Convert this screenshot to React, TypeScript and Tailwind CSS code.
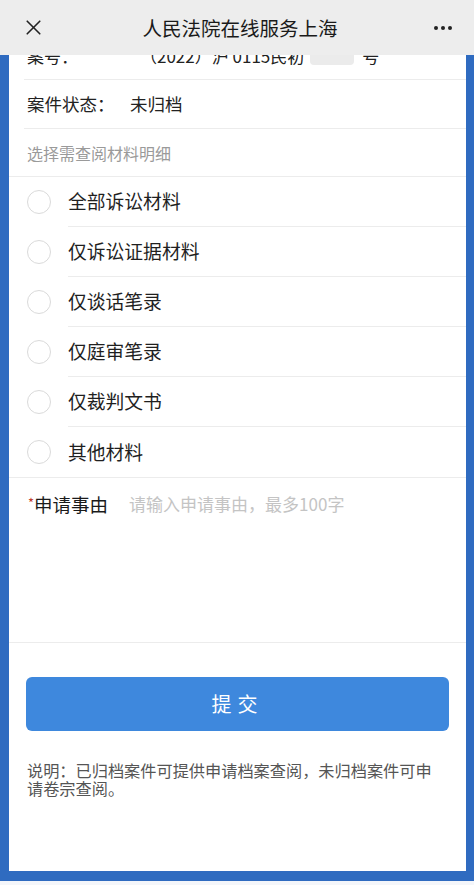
import { X } from "lucide-react";

const options = ["全部诉讼材料", "仅诉讼证据材料", "仅谈话笔录", "仅庭审笔录", "仅裁判文书", "其他材料"];

const font = { fontFamily: '"Noto Sans CJK SC", "Noto Sans", sans-serif' };

export default function App() {
  return (
    <div className="flex h-[885px] w-[474px] flex-col bg-[#f4f6fa]" style={font}>
      {/* WeChat style top bar */}
      <div className="flex h-[55px] shrink-0 items-center justify-between bg-[#ededed] pl-[21px] pr-[22px]">
        <X className="h-[25px] w-[25px] text-[#222]" strokeWidth={1.6} />
        <div className="text-[19.5px] text-[#1a1a1a]">人民法院在线服务上海</div>
        <div className="flex gap-[3px]">
          <span className="h-[4px] w-[4px] rounded-full bg-[#222]" />
          <span className="h-[4px] w-[4px] rounded-full bg-[#222]" />
          <span className="h-[4px] w-[4px] rounded-full bg-[#222]" />
        </div>
      </div>

      {/* blue frame */}
      <div className="bg-[#2f6bc0] pl-[9px] pr-[8px] pb-[10px]">
        <div className="flex h-[816px] flex-col bg-white">
          {/* case number row, cut under the top bar */}
          <div className="ml-[15px] h-[25px] overflow-hidden border-b border-[#ececec]">
            <div className="-mt-[12px] flex items-center text-[17px] text-[#222]">
              <span className="w-[116px] pl-[3px]">案号：</span>
              <span>（2022）沪 0115民初</span>
              <span className="ml-[6px] mr-[8px] h-[18px] w-[44px] rounded-sm bg-[#ebebeb]" />
              <span>号</span>
            </div>
          </div>

          {/* case status */}
          <div className="ml-[15px] flex h-[49px] items-center border-b border-[#ececec] pl-[3px] text-[17.5px] text-[#222]">
            <span className="w-[103px]">案件状态：</span>
            <span>未归档</span>
          </div>

          <div className="flex h-[48px] items-center border-b border-[#ececec] pl-[18px] text-[16px] text-[#9a9a9a]">
            选择需查阅材料明细
          </div>

          {/* options */}
          {options.map((o, i) => (
            <div key={o} className="flex h-[50px] items-center">
              <div className="flex w-[59px] shrink-0 justify-center pl-[1px]">
                <span className="h-[24px] w-[24px] rounded-full border-[1.5px] border-[#dadada]" />
              </div>
              <div
                className={`flex h-full flex-1 items-center text-[18.8px] text-[#1f1f1f] ${
                  i < options.length - 1 ? "border-b border-[#ececec]" : ""
                }`}
              >
                {o}
              </div>
            </div>
          ))}

          {/* reason */}
          <div className="flex h-[166px] items-start border-t border-b border-[#ececec] pl-[19px] pt-[13px]">
            <span className="mt-[2px] text-[13px] text-[#c0392b]">*</span>
            <span className="text-[18.5px] text-[#1a1a1a]">申请事由</span>
            <span className="ml-[21px] text-[17px] text-[#c4c4c4]">请输入申请事由，最多100字</span>
          </div>

          <button className="mx-[17px] mt-[34px] flex h-[54px] items-center justify-center rounded-[6px] bg-[#3e88dd] text-[20px] tracking-[6px] text-white">
            提交
          </button>

          <p className="ml-[18px] mr-[24px] mt-[30px] text-[16.2px] leading-[18px] text-[#555]">
            说明：已归档案件可提供申请档案查阅，未归档案件可申请卷宗查阅。
          </p>
        </div>
      </div>
    </div>
  );
}
